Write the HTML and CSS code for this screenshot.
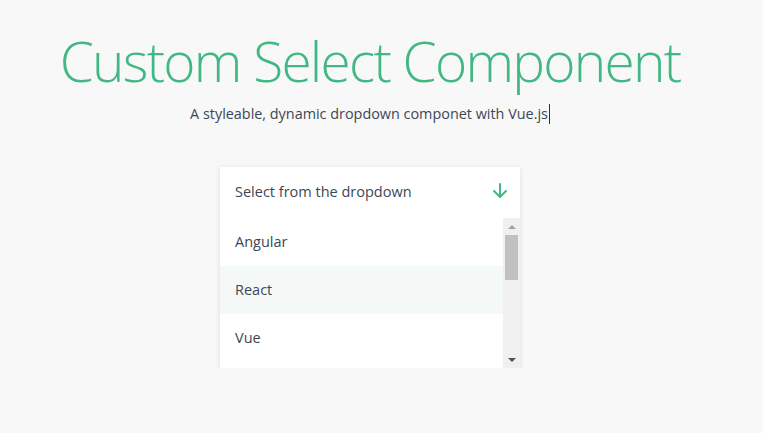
FILE: index.html
```html
<!DOCTYPE html>
<html>
<head>
<meta charset="utf-8">
<link rel="stylesheet" href="styles.css">
</head>
<body>
<main class="page">
  <h1 class="title">Custom Select Component</h1>
  <p class="subtitle">A styleable, dynamic dropdown componet with Vue.js<span class="caret"></span></p>
  <div class="select">
    <div class="select-head">
      <span>Select from the dropdown</span>
      <svg class="arrow" width="18" height="18" viewBox="0 0 18 18"><path d="M9 2v13M3 9l6 6 6-6" fill="none" stroke="#41b883" stroke-width="2" stroke-linecap="round" stroke-linejoin="round"/></svg>
    </div>
    <div class="select-body">
      <ul class="options">
        <li class="option">Angular</li>
        <li class="option active">React</li>
        <li class="option">Vue</li>
      </ul>
      <div class="scrollbar">
        <span class="sb-btn up"></span>
        <div class="sb-track"><div class="sb-thumb"></div></div>
        <span class="sb-btn down"></span>
      </div>
    </div>
  </div>
</main>
</body>
</html>
```

FILE: styles.css
```css
html, body {
  margin: 0;
  padding: 0;
  background: #f8f8f8;
}
body {
  font-family: "Open Sans", "Liberation Sans", sans-serif;
  color: #3b4757;
}
.page {
  width: 740px;
  display: flex;
  flex-direction: column;
  align-items: center;
}
.title {
  margin: 26px 0 0 0;
  font-size: 55px;
  line-height: 70px;
  font-weight: 300;
  color: #41b883;
  letter-spacing: -1.75px;
}
.subtitle {
  margin: 7px 0 0 0;
  font-size: 14.4px;
  line-height: 22px;
  color: #3b4757;
  display: flex;
  align-items: center;
}
.caret {
  display: inline-block;
  width: 1px;
  height: 20px;
  background: #333;
  margin-left: 1px;
}
.select {
  margin-top: 42px;
  width: 300px;
  background: #fff;
  box-shadow: 0 1px 5px rgba(0,0,0,0.12);
}
.select-head {
  height: 48px;
  padding: 0 11px 3px 15px;
  display: flex;
  align-items: center;
  justify-content: space-between;
  font-size: 14.5px;
}
.arrow {
  display: block;
}
.select-body {
  height: 150px;
  display: flex;
  overflow: hidden;
}
.options {
  list-style: none;
  margin: 0;
  padding: 0;
  flex: 1;
}
.option {
  height: 48px;
  line-height: 48px;
  padding-left: 15px;
  font-size: 14.5px;
}
.option.active {
  background: #f4f9f7;
}
.scrollbar {
  width: 17px;
  background: #f0f0f0;
  display: flex;
  flex-direction: column;
}
.sb-btn {
  height: 17px;
  display: flex;
  align-items: center;
  justify-content: center;
}
.sb-btn::before {
  content: "";
  width: 0;
  height: 0;
  border-left: 4px solid transparent;
  border-right: 4px solid transparent;
}
.sb-btn.up::before {
  border-bottom: 4px solid #a3a3a3;
}
.sb-btn.down::before {
  border-top: 4px solid #505050;
}
.sb-track {
  flex: 1;
}
.sb-thumb {
  margin: 0 2px;
  height: 45px;
  background: #c1c1c1;
}
```
